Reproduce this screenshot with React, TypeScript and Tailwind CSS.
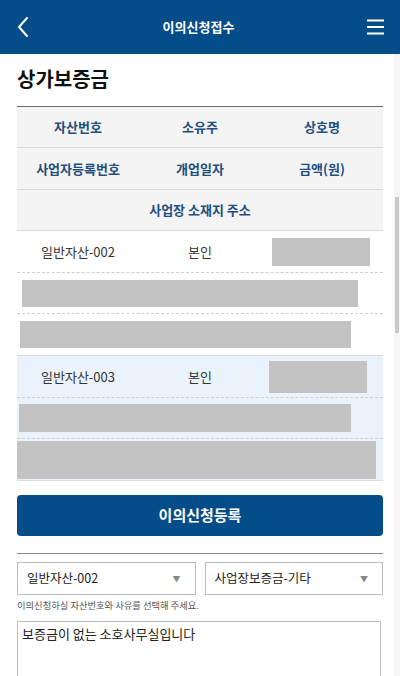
import React from 'react';

const font = { fontFamily: '"Noto Sans CJK KR", "Noto Sans", sans-serif' };

const HeaderCell: React.FC<{ children: React.ReactNode }> = ({ children }) => (
    <div className="flex items-center justify-center text-[13px] font-bold text-[#1f4f80]">{children}</div>
);

const Block: React.FC<{ className: string }> = ({ className }) => <div className={`bg-[#c3c3c3] ${className}`} />;

interface AssetRowProps {
    no: string;
    owner: string;
    tinted?: boolean;
    blocks: [string, string, string];
}

const AssetRow: React.FC<AssetRowProps> = ({ no, owner, tinted, blocks }) => (
    <div className={`${tinted ? 'bg-[#eaf2fb]' : 'bg-white'} border-b border-[#dcdcdc]`}>
        <div className="grid grid-cols-3 h-[42px] items-center border-b border-dashed border-[#cfcfcf] text-[13px] text-[#333]">
            <div className="text-center">{no}</div>
            <div className="text-center">{owner}</div>
            <div className="flex h-full items-center">
                <Block className={blocks[0]} />
            </div>
        </div>
        <div className="h-[41px] flex items-center border-b border-dashed border-[#cfcfcf]">
            <Block className={blocks[1]} />
        </div>
        <div className="h-[41px] flex items-center">
            <Block className={blocks[2]} />
        </div>
    </div>
);

const Select: React.FC<{ value: string }> = ({ value }) => (
    <div className="flex-1 h-[33px] border border-[#bdbdbd] bg-white flex items-center justify-between pl-[9px] pr-[14px] text-[12.5px] text-[#222]">
        <span>{value}</span>
        <span className="text-[8px] text-[#888]">▼</span>
    </div>
);

export default function App() {
    return (
        <div className="relative w-[400px] h-[676px] overflow-hidden bg-white" style={font}>
            <header className="h-[54px] bg-[#044d89] flex items-center justify-between px-[15px]">
                <svg width="16" height="24" viewBox="0 0 16 24" fill="none" stroke="white" strokeWidth="2" strokeLinecap="round" strokeLinejoin="round">
                    <path d="M12 3 L4 12 L12 21" />
                </svg>
                <h1 className="text-[13px] font-bold text-white">이의신청접수</h1>
                <svg width="19" height="18" viewBox="0 0 19 18" fill="none" stroke="white" strokeWidth="1.8">
                    <path d="M1 2.5H18M1 9H18M1 15.5H18" />
                </svg>
            </header>

            <div className="px-[17px]">
                <h2 className="pt-[11px] text-[20px] leading-[28px] font-bold text-[#111]">상가보증금</h2>

                <div className="mt-[13px] border-t border-[#6a6a6a]">
                    <div className="bg-[#f4f4f4]">
                        <div className="grid grid-cols-3 h-[41px] border-b border-[#dadada]">
                            <HeaderCell>자산번호</HeaderCell>
                            <HeaderCell>소유주</HeaderCell>
                            <HeaderCell>상호명</HeaderCell>
                        </div>
                        <div className="grid grid-cols-3 h-[42px] border-b border-[#dadada]">
                            <HeaderCell>사업자등록번호</HeaderCell>
                            <HeaderCell>개업일자</HeaderCell>
                            <HeaderCell>금액(원)</HeaderCell>
                        </div>
                        <div className="h-[41px] flex items-center justify-center border-b border-[#dadada] text-[13px] font-bold text-[#1f4f80]">
                            사업장 소재지 주소
                        </div>
                    </div>

                    <AssetRow
                        no="일반자산-002"
                        owner="본인"
                        blocks={['ml-[11px] w-[98px] h-[28px]', 'ml-[5px] w-[336px] h-[27px]', 'ml-[3px] w-[331px] h-[27px]']}
                    />
                    <AssetRow
                        no="일반자산-003"
                        owner="본인"
                        tinted
                        blocks={['ml-[8px] w-[98px] h-[32px]', 'ml-[2px] w-[332px] h-[28px]', 'w-[359px] h-[38px]']}
                    />
                </div>

                <button className="mt-[14px] w-full h-[41px] rounded-[4px] bg-[#044d89] text-white text-[15px] font-bold">
                    이의신청등록
                </button>

                <div className="mt-[17px] border-t border-[#8a8a8a]" />

                <div className="mt-[8px] flex gap-[9px]">
                    <Select value="일반자산-002" />
                    <Select value="사업장보증금-기타" />
                </div>
                <p className="mt-[4px] text-[9.3px] text-[#555]">이의신청하실 자산번호와 사유를 선택해 주세요.</p>

                <div className="mt-[8px] mr-[2px] h-[100px] border border-[#bdbdbd] px-[4px] py-[2px] text-[13px] text-[#222]">
                    보증금이 없는 소호사무실입니다
                </div>
            </div>

            <div className="absolute right-0 top-[54px] bottom-0 w-[6px] bg-[#f6f6f6]">
                <div className="mt-[143px] h-[136px] w-[4px] ml-[1px] bg-[#c9c9c9]" />
            </div>
        </div>
    );
}
